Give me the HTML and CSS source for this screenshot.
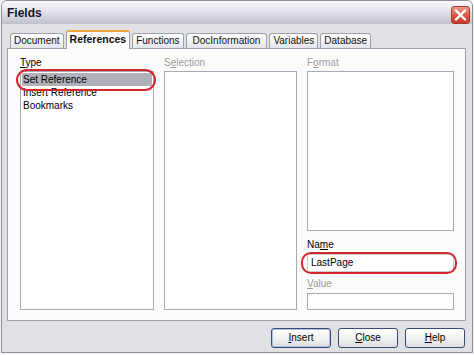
FILE: index.html
```html
<!DOCTYPE html>
<html>
<head>
<meta charset="utf-8">
<link rel="stylesheet" href="styles.css">
</head>
<body>
<div class="window">
  <div class="titlebar">
    <span class="title">Fields</span>
    <span class="close"><svg width="13" height="12" viewBox="0 0 13 12"><path d="M2 1.5 L11 10.5 M11 1.5 L2 10.5" stroke="#fff" stroke-width="2.4" stroke-linecap="round"/></svg></span>
  </div>
  <div class="content">
    <div class="tabs">
      <div class="tab">Document</div>
      <div class="tab active">References</div>
      <div class="tab">Functions</div>
      <div class="tab wide">DocInformation</div>
      <div class="tab">Variables</div>
      <div class="tab">Database</div>
    </div>
    <div class="panel">
      <div class="col col-type">
        <div class="label"><u>T</u>ype</div>
        <div class="list">
          <div class="item selected">Set Reference</div>
          <div class="item">Insert Reference</div>
          <div class="item">Bookmarks</div>
          <div class="oval oval-type"></div>
        </div>
      </div>
      <div class="col col-sel">
        <div class="label disabled">S<u>e</u>lection</div>
        <div class="list"></div>
      </div>
      <div class="col col-format">
        <div class="label disabled">F<u>o</u>rmat</div>
        <div class="list"></div>
        <div class="label name-label">Na<u>m</u>e</div>
        <div class="input name-input">LastPage<div class="oval oval-name"></div></div>
        <div class="label disabled value-label"><u>V</u>alue</div>
        <div class="input value-input"></div>
      </div>
    </div>
    <div class="buttons">
      <div class="btn default"><u>I</u>nsert</div>
      <div class="btn"><u>C</u>lose</div>
      <div class="btn"><u>H</u>elp</div>
    </div>
  </div>
</div>
</body>
</html>
```
FILE: styles.css
```css
* { box-sizing: border-box; }
html, body { margin: 0; padding: 0; background: #f4f4f6; }
body {
  width: 474px;
  height: 355px;
  overflow: hidden;
  font-family: "Liberation Sans", Arial, sans-serif;
  font-size: 10px;
  color: #000;
}
.window {
  margin: 0 1px;
  width: 472px;
  border: 1px solid #8e8e98;
  border-radius: 6px 6px 0 0;
  background: #e1e0e4;
}
.titlebar {
  height: 23px;
  display: flex;
  align-items: center;
  justify-content: space-between;
  padding: 0 2px 0 5px;
  border-radius: 5px 5px 0 0;
  background: linear-gradient(#fbfbfd 0%, #e9e9ef 35%, #d0d1da 75%, #bfc0cb 100%);
}
.title {
  font-weight: bold;
  font-size: 12px;
  color: #15152a;
  margin-top: 1px;
}
.close {
  width: 19px;
  height: 18px;
  margin-top: 4px;
  border: 1px solid #a83a30;
  border-radius: 3px;
  background: linear-gradient(#ef9a88, #d9573f 55%, #c53b28);
  display: flex;
  align-items: center;
  justify-content: center;
}
.content {
  padding: 6px 6px 4px 5px;
}
.tabs {
  display: flex;
  align-items: flex-end;
  height: 18px;
  padding-left: 3px;
  gap: 2px;
  position: relative;
  z-index: 1;
}
.tab {
  height: 15px;
  padding: 0 3px;
  line-height: 13px;
  border: 1px solid #9ea1ab;
  border-bottom: none;
  border-radius: 3px 3px 0 0;
  background: linear-gradient(#ffffff, #f1f1f4 60%, #e3e3ea);
  color: #111;
}
.tab.wide { padding: 0 6px; }
.tab.active {
  height: 19px;
  margin-bottom: -1px;
  padding: 0 3px;
  border-top: 2px solid #eea53a;
  background: #fbfbf9;
  font-weight: bold;
  font-size: 10.5px;
  line-height: 15px;
}
.panel {
  height: 273px;
  border: 1px solid #9ea1ab;
  background: #fbfbf9;
  padding: 7px 10px 10px 12px;
  display: flex;
  gap: 10px;
}
.col {
  display: flex;
  flex-direction: column;
}
.col-type { width: 134px; }
.col-sel { width: 133px; }
.col-format { width: 147px; }
.label {
  height: 13px;
  line-height: 13px;
  margin-bottom: 2px;
}
.label.disabled { color: #9c9ca0; }
.list {
  flex: 1;
  position: relative;
  background: #fff;
  border: 1px solid #a4abb4;
  padding: 1px;
}
.item {
  height: 13px;
  line-height: 13px;
  padding-left: 1px;
  white-space: nowrap;
}
.item.selected {
  background: #b0b0bb;
}
.name-label { margin-top: 7px; margin-bottom: 3px; }
.value-label { margin-top: 5px; margin-bottom: 3px; }
.input {
  position: relative;
  background: #fff;
  border: 1px solid #a4abb4;
  padding-left: 3px;
  line-height: 16px;
}
.name-input { height: 18px; border-color: #c8ccd2; }
.value-input { height: 17px; }
.oval {
  position: absolute;
  border: 2px solid #d4262e;
  pointer-events: none;
}
.oval-type {
  left: -5px;
  top: -3px;
  width: 140px;
  height: 22px;
  border-radius: 11px;
}
.oval-name {
  left: -7px;
  top: -3px;
  width: 156px;
  height: 22px;
  border-radius: 10px;
}
.buttons {
  display: flex;
  justify-content: flex-end;
  gap: 7px;
  margin-top: 7px;
  margin-right: 1px;
}
.btn {
  width: 60px;
  height: 20px;
  line-height: 18px;
  text-align: center;
  border: 1px solid #3b4a72;
  border-radius: 3px;
  background: linear-gradient(#ffffff, #f3f3f1 50%, #dddce2);
}
.btn.default {
  box-shadow: inset 0 0 0 1px #a9c0e8;
}
```
